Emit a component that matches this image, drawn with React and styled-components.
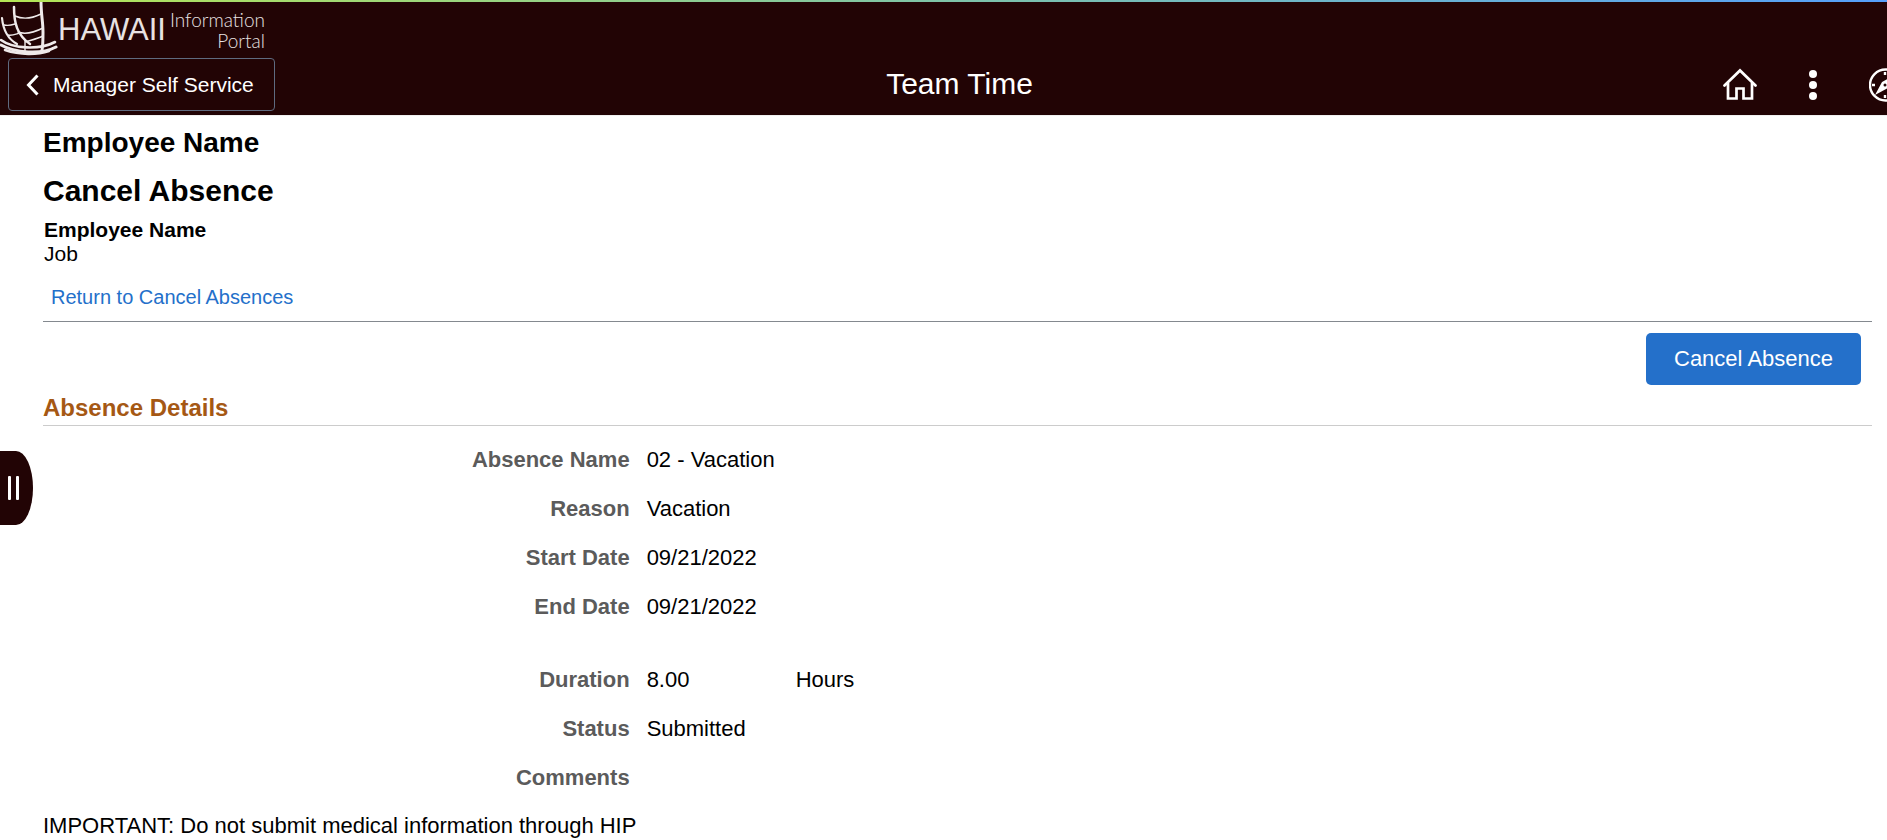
import React from "react";
import styled, { createGlobalStyle } from "styled-components";

const GlobalStyle = createGlobalStyle`
  * {
    box-sizing: border-box;
  }

  body {
    margin: 0;
    background: #fff;
    color: #000;
    font-family: "Liberation Sans", Arial, sans-serif;
    overflow-x: hidden;
  }

  h1, h2, h3, p, dl, dd {
    margin: 0;
  }
`;

const Header = styled.header`
  background: #220405;
  border-bottom: 1px solid #f0f0f0;
  overflow: hidden;
`;

const AccentBar = styled.div`
  height: 2px;
  background: linear-gradient(90deg, #b5e655 0%, #7fc4a8 50%, #559ffb 100%);
`;

const Brand = styled.a`
  display: flex;
  height: 56px;
  color: #e8e2e2;
  text-decoration: none;
`;

const BrandMark = styled.svg`
  flex: none;
  width: 58px;
  height: 54px;
`;

const BrandName = styled.span`
  font-size: 31px;
  line-height: 56px;
`;

const BrandTagline = styled.span`
  display: flex;
  flex-direction: column;
  padding: 7px 0 0 4px;
  font-family: Lato, sans-serif;
  font-weight: 300;
  font-size: 19px;
  line-height: 21px;
  text-align: right;
`;

/* The bar is wider than the viewport, so its last action is cut by the edge. */
const NavBar = styled.nav`
  display: grid;
  grid-template-columns: 1fr auto 1fr;
  align-items: center;
  margin-right: -32px;
  padding: 0 8px 4px;
  color: #fff;
`;

const BackButton = styled.button`
  display: flex;
  align-items: center;
  justify-self: start;
  gap: 14px;
  height: 53px;
  padding: 0 20px 0 17px;
  border: 1px solid #5f6b80;
  border-radius: 4px;
  background: transparent;
  color: #fff;
  font-family: inherit;
  font-size: 21px;
  cursor: pointer;
`;

const PageTitle = styled.h1`
  padding-bottom: 2px;
  font-size: 30px;
  font-weight: 400;
  line-height: 36px;
`;

const Actions = styled.div`
  display: flex;
  justify-content: flex-end;
  gap: 52px;
  padding-right: 8px;
`;

const IconButton = styled.button`
  display: flex;
  padding: 0;
  border: 0;
  background: transparent;
  color: #fff;
  cursor: pointer;
`;

const Content = styled.main`
  padding: 9px 15px 0 43px;
`;

const EmployeeHeading = styled.h2`
  font-size: 28px;
  line-height: 36px;
`;

const TaskHeading = styled.h2`
  margin-top: 12px;
  font-size: 30px;
  line-height: 36px;
`;

const Person = styled.div`
  margin-top: 9px;
  padding-left: 1px;
  font-size: 21px;
  line-height: 24px;
`;

const PersonName = styled.h3`
  font-size: inherit;
`;

const ReturnRow = styled.div`
  padding: 19px 8px 12px;
  border-bottom: 1px solid #84898f;
`;

const ReturnLink = styled.a`
  display: block;
  color: #2470ca;
  font-size: 20px;
  line-height: 24px;
  text-decoration: none;
`;

const ButtonRow = styled.div`
  display: flex;
  justify-content: flex-end;
  padding: 11px 11px 8px;
`;

const PrimaryButton = styled.button`
  height: 52px;
  padding: 0 28px;
  border: 0;
  border-radius: 5px;
  background: #2470ca;
  color: #fff;
  font-family: inherit;
  font-size: 22px;
  cursor: pointer;
`;

const SectionHeading = styled.h3`
  padding-bottom: 2px;
  border-bottom: 1px solid #ccc;
  color: #a55814;
  font-size: 24px;
  line-height: 30px;
`;

const Details = styled.dl`
  padding: 9px 0 0 2px;
  font-size: 22px;
  line-height: 49px;
`;

const Detail = styled.div`
  display: grid;
  grid-template-columns: 32% auto;
  column-gap: 17px;
  margin-top: ${(props) => (props.$spaced ? "24px" : "0")};
`;

const Label = styled.dt`
  color: #5b5b5b;
  font-weight: 700;
  text-align: right;
`;

const Value = styled.dd`
  display: flex;
`;

const Amount = styled.span`
  width: 149px;
`;

const Notice = styled.p`
  margin-top: 11px;
  font-size: 22px;
  line-height: 26px;
`;

const PanelHandle = styled.button`
  position: fixed;
  top: 451px;
  left: 0;
  display: flex;
  align-items: center;
  gap: 5px;
  width: 33px;
  height: 74px;
  padding: 0 0 0 8px;
  border: 0;
  border-radius: 0 17px 17px 0 / 0 37px 37px 0;
  background: #220405;
  cursor: pointer;
`;

const HandleBar = styled.span`
  width: 3px;
  height: 24px;
  border-radius: 1px;
  background: #fff;
`;

const details = [
  { label: "Absence Name", value: "02 - Vacation" },
  { label: "Reason", value: "Vacation" },
  { label: "Start Date", value: "09/21/2022" },
  { label: "End Date", value: "09/21/2022" },
  { label: "Duration", value: "8.00", unit: "Hours", spaced: true },
  { label: "Status", value: "Submitted" },
  { label: "Comments", value: "" },
];

const CanoeMark = () => (
  <BrandMark viewBox="0 0 58 54" fill="none" stroke="#efeaea" strokeLinecap="round" aria-hidden="true">
    <path strokeWidth="3" d="M41 0C41 12 43 20 43 30C43 38 43 43 42 48" />
    <path strokeWidth="2.5" d="M14 5C14 21 17 33 30 42" />
    <path strokeWidth="2.2" d="M2 16C3 26 6 36 17 42" />
    <path strokeWidth="1.4" d="M15 14C24 18 33 16 41 12M18 30C26 33 35 30 43 26M4 23C8 24 12 23 15 22M8 33C12 34 16 32 20 31M25 38L25 50M25 40C31 38 37 37 43 34" />
    <path strokeWidth="2.6" d="M1 38C13 47 40 48 55 40" />
    <path strokeWidth="3" d="M1 43C15 51 41 53 56 45" />
    <path strokeWidth="2.6" d="M5 48C20 53 37 53 49 49" />
  </BrandMark>
);

const ChevronIcon = () => (
  <svg width="13" height="22" viewBox="0 0 13 22" fill="none" stroke="currentColor" strokeWidth="3" aria-hidden="true">
    <path d="M11.5 1.5L2.5 11L11.5 20.5" />
  </svg>
);

const HomeIcon = () => (
  <svg width="34" height="34" viewBox="0 0 34 34" fill="none" stroke="currentColor" strokeWidth="2.7" aria-hidden="true">
    <path strokeLinecap="round" d="M1.5 17.5L17 2.5L32.5 17.5" />
    <path d="M5 15V30.5H13.5V20.5H20.5V30.5H29V15" />
  </svg>
);

const DotsIcon = () => (
  <svg width="8" height="34" viewBox="0 0 8 34" fill="currentColor" aria-hidden="true">
    <circle cx="4" cy="6" r="4" />
    <circle cx="4" cy="17" r="4" />
    <circle cx="4" cy="28" r="4" />
  </svg>
);

const CompassIcon = () => (
  <svg width="34" height="34" viewBox="1 0 34 34" fill="none" stroke="currentColor" strokeWidth="2.4" aria-hidden="true">
    <circle cx="17.5" cy="17" r="15.5" />
    <path d="M17 4V7M17 27V30M4 17H7M27 17H30" />
    <path fill="currentColor" stroke="none" fillRule="evenodd" d="M7 27L14 14L27 7L20 20ZM17 15.5A1.5 1.5 0 1 0 17 18.5A1.5 1.5 0 1 0 17 15.5Z" />
  </svg>
);

const App = () => {
  return (
    <>
      <GlobalStyle />
      <Header>
        <AccentBar />
        <Brand href="#">
          <CanoeMark />
          <BrandName>HAWAII</BrandName>
          <BrandTagline>
            <span>Information</span>
            <span>Portal</span>
          </BrandTagline>
        </Brand>
        <NavBar>
          <BackButton type="button">
            <ChevronIcon />
            Manager Self Service
          </BackButton>
          <PageTitle>Team Time</PageTitle>
          <Actions>
            <IconButton type="button" aria-label="Home">
              <HomeIcon />
            </IconButton>
            <IconButton type="button" aria-label="Actions">
              <DotsIcon />
            </IconButton>
            <IconButton type="button" aria-label="Navigator">
              <CompassIcon />
            </IconButton>
          </Actions>
        </NavBar>
      </Header>

      <Content>
        <EmployeeHeading>Employee Name</EmployeeHeading>
        <TaskHeading>Cancel Absence</TaskHeading>
        <Person>
          <PersonName>Employee Name</PersonName>
          <p>Job</p>
        </Person>
        <ReturnRow>
          <ReturnLink href="#">Return to Cancel Absences</ReturnLink>
        </ReturnRow>
        <ButtonRow>
          <PrimaryButton type="button">Cancel Absence</PrimaryButton>
        </ButtonRow>

        <SectionHeading>Absence Details</SectionHeading>
        <Details>
          {details.map(({ label, value, unit, spaced }) => (
            <Detail key={label} $spaced={spaced}>
              <Label>{label}</Label>
              <Value>
                {unit ? <Amount>{value}</Amount> : value}
                {unit}
              </Value>
            </Detail>
          ))}
        </Details>
        <Notice>IMPORTANT: Do not submit medical information through HIP</Notice>
      </Content>

      <PanelHandle type="button" aria-label="Expand panel">
        <HandleBar />
        <HandleBar />
      </PanelHandle>
    </>
  );
};

export default App;
